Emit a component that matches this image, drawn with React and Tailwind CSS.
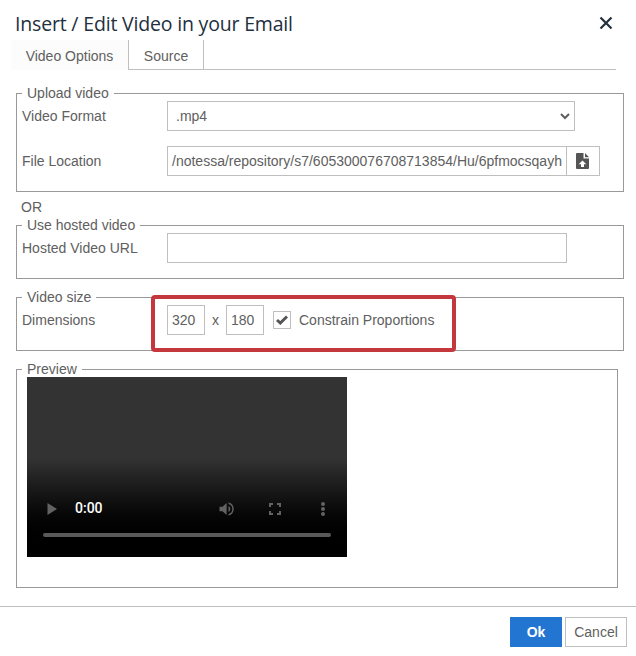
import { useState } from "react";

const tabs = [
  { id: "options", label: "Video Options" },
  { id: "source", label: "Source" },
];

function Fieldset({ legend, className, children }) {
  return (
    <fieldset className={`ml-4 border border-[#999] ${className}`}>
      <legend className="ml-[5px] h-4 px-[5px] leading-4">{legend}</legend>
      {children}
    </fieldset>
  );
}

function Row({ label, children }) {
  return (
    <div className="flex h-[30px] items-center pl-[5px]">
      <span className="w-[145px] shrink-0">{label}</span>
      {children}
    </div>
  );
}

function VideoPlayer() {
  return (
    <div className="ml-2.5 flex h-[180px] w-[320px] flex-col bg-linear-to-b from-[#333] from-45% to-black to-97%">
      <div className="mt-[122px] flex h-5 items-center text-[#626262]">
        <svg className="ml-4 size-[18px]" viewBox="0 0 18 18" fill="currentColor">
          <path d="M4.500 3v12L14 9z" />
        </svg>
        <span className="mb-0.5 ml-[14px] w-[143px] font-[Roboto,sans-serif] text-sm font-medium text-white">0:00</span>
        <svg className="size-[18px]" viewBox="0 0 24 24" fill="currentColor">
          <path d="M2 9v6h4l5.500 5V4L6 9H2zm14.500 3A4.500 4.500 0 0 0 14 7.970v8.050A4.470 4.470 0 0 0 16.500 12zM14 3.230v2.060a7 7 0 0 1 0 13.420v2.060a9 9 0 0 0 0-17.540z" />
        </svg>
        <svg className="ml-[30px] size-[18px]" viewBox="0 0 18 18" fill="currentColor">
          <path d="M3 3h4v2H5v2H3zm8 0h4v4h-2V5h-2zM3 11h2v2h2v2H3zm10 0h2v4h-4v-2h2z" />
        </svg>
        <svg className="ml-[30px] size-[18px]" viewBox="0 0 18 18" fill="currentColor">
          <circle cx="9" cy="4" r="2" />
          <circle cx="9" cy="9" r="2" />
          <circle cx="9" cy="14" r="2" />
        </svg>
      </div>
      <div className="mx-4 mt-[14px] h-1 rounded-full bg-[#595959]" />
    </div>
  );
}

export default function App() {
  const [tab, setTab] = useState("options");
  const [constrain, setConstrain] = useState(true);

  return (
    <div className="flex h-[656px] w-[636px] flex-col overflow-hidden bg-white font-['Liberation_Sans',Arial,sans-serif] text-sm text-[#606060]">
      <header className="flex h-10 shrink-0 items-start justify-between pr-[23px] pl-[15px] text-[#222f3e]">
        <h1 className="mt-[10px] font-['Open_Sans',sans-serif] text-[19.5px] leading-7 tracking-[-0.18px]">Insert / Edit Video in your Email</h1>
        <button type="button" aria-label="Close" className="mt-[16px]">
          <svg className="size-[14px]" viewBox="0 0 14 14" fill="none" stroke="currentColor" strokeWidth="2.2">
            <path d="M1.500 1.500l11 11M12.500 1.500l-11 11" />
          </svg>
        </button>
      </header>

      <nav className="mr-5 ml-[11px] flex h-[30px] shrink-0">
        {tabs.map((t) => (
          <button
            key={t.id}
            type="button"
            onClick={() => setTab(t.id)}
            className={`border-r border-r-[#bfbfbf] pt-0.5 ${tab === t.id ? "w-[118px] bg-[#fcfcfc]" : "w-[75px] border-b border-b-[#bfbfbf]"}`}
          >
            {t.label}
          </button>
        ))}
        <div className="flex-1 border-b border-[#bfbfbf]" />
      </nav>

      <main className="flex flex-col">
        <Fieldset legend="Upload video" className="mt-[15px] mr-3 h-[107px]">
          <Row label="Video Format">
            <div className="flex h-[30px] w-[408px] items-center justify-between border border-[#bfbfbf] pr-[4px] pl-2">
              <span>.mp4</span>
              <svg className="size-[10px]" viewBox="0 0 10 10" fill="none" stroke="currentColor" strokeWidth="2">
                <path d="M1 3l4 4 4-4" />
              </svg>
            </div>
          </Row>
          <div className="h-[15px]" />
          <Row label="File Location">
            <div className="flex h-[30px] w-[400px] items-center overflow-hidden border border-[#bfbfbf] pl-1 whitespace-nowrap">
              /notessa/repository/s7/605300076708713854/Hu/6pfmocsqayh
            </div>
            <button type="button" aria-label="Browse" className="flex h-[30px] w-[33px] items-center border border-l-0 border-[#bfbfbf] pl-[9px]">
              <svg className="h-4 w-[13px] text-[#555]" viewBox="0 0 13 16">
                <path fill="currentColor" d="M1 0h6.500v5.500H13V15a1 1 0 0 1-1 1H1a1 1 0 0 1-1-1V1a1 1 0 0 1 1-1zM9 0l4 4.200H9z" />
                <path fill="#fff" d="M6.500 7.500l3.800 3.800H8V14H5v-2.700H2.700z" />
              </svg>
            </button>
          </Row>
        </Fieldset>

        <p className="mt-[7px] ml-[21px] h-4 leading-4">OR</p>

        <Fieldset legend="Use hosted video" className="mt-[2px] mr-3 h-[62px]">
          <Row label="Hosted Video URL">
            <input className="h-[30px] w-[400px] border border-[#bfbfbf] px-1 outline-none" />
          </Row>
        </Fieldset>

        <Fieldset legend="Video size" className="mt-[10px] mr-3 h-[62px]">
          <Row label="Dimensions">
            <div className="relative flex items-center">
              <div className="pointer-events-none absolute -top-[10px] -left-4 h-[57px] w-[305px] rounded-[4px] border-4 border-[#c4373c]" />
              <input defaultValue="320" className="h-[30px] w-[38px] border border-[#bfbfbf] px-1 outline-none" />
              <span className="w-[21px] text-center">x</span>
              <input defaultValue="180" className="h-[30px] w-[38px] border border-[#bfbfbf] px-1 outline-none" />
              <button
                type="button"
                role="checkbox"
                aria-checked={constrain}
                aria-label="Constrain Proportions"
                onClick={() => setConstrain(!constrain)}
                className="ml-[9px] grid size-[18px] place-items-center border border-[#bfbfbf]"
              >
                {constrain && (
                  <svg className="h-[10px] w-3 text-[#555]" viewBox="0 0 12 10" fill="none" stroke="currentColor" strokeWidth="3">
                    <path d="M1 5l3.300 3L11 1.500" />
                  </svg>
                )}
              </button>
              <span className="ml-2">Constrain Proportions</span>
            </div>
          </Row>
        </Fieldset>

        <Fieldset legend="Preview" className="mt-[10px] mr-[18px] h-[227px]">
          <VideoPlayer />
        </Fieldset>
      </main>

      <footer className="mt-[18px] flex h-[50px] justify-end gap-[3px] border-t border-[#bfbfbf] pt-[10px] pr-[9px]">
        <button type="button" className="h-[30px] w-[52px] bg-[#2276d2] font-bold text-white">Ok</button>
        <button type="button" className="h-[30px] w-[62px] border border-[#bfbfbf]">Cancel</button>
      </footer>
    </div>
  );
}
